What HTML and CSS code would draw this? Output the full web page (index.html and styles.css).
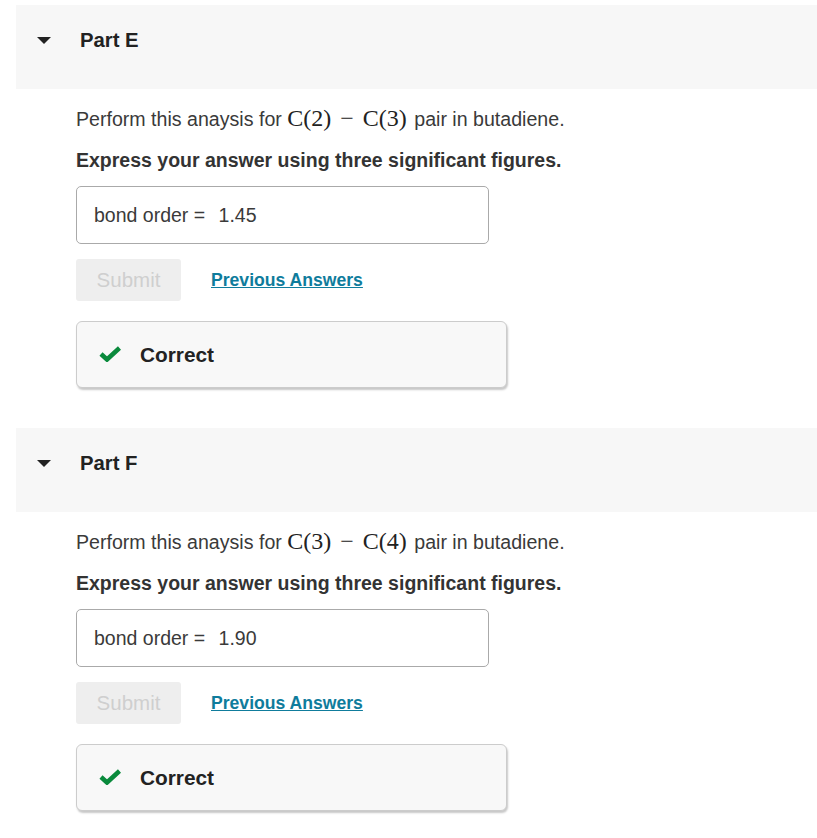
FILE: index.html
```html
<!DOCTYPE html>
<html>
<head>
<meta charset="utf-8">
<link rel="stylesheet" href="styles.css">
</head>
<body>
<div class="page">
  <section class="part">
    <div class="part-header">
      <span class="caret"></span>
      <h2 class="part-title">Part E</h2>
    </div>
    <div class="part-body">
      <p class="prompt">Perform this anaysis for <span class="math">C(2)<span class="minus">−</span>C(3)</span> pair in butadiene.</p>
      <p class="instr">Express your answer using three significant figures.</p>
      <div class="answer-box">bond order = <span class="val">1.45</span></div>
      <div class="actions">
        <span class="submit">Submit</span>
        <a class="prev" href="#">Previous Answers</a>
      </div>
      <div class="feedback">
        <svg class="check" viewBox="0 0 22 16" width="22" height="16"><path d="M2 8 L8 13.5 L20.5 2" fill="none" stroke="#0a8a3c" stroke-width="4.6"/></svg>
        <span class="feedback-text">Correct</span>
      </div>
    </div>
  </section>
  <section class="part">
    <div class="part-header">
      <span class="caret"></span>
      <h2 class="part-title">Part F</h2>
    </div>
    <div class="part-body">
      <p class="prompt">Perform this anaysis for <span class="math">C(3)<span class="minus">−</span>C(4)</span> pair in butadiene.</p>
      <p class="instr">Express your answer using three significant figures.</p>
      <div class="answer-box">bond order = <span class="val">1.90</span></div>
      <div class="actions">
        <span class="submit">Submit</span>
        <a class="prev" href="#">Previous Answers</a>
      </div>
      <div class="feedback">
        <svg class="check" viewBox="0 0 22 16" width="22" height="16"><path d="M2 8 L8 13.5 L20.5 2" fill="none" stroke="#0a8a3c" stroke-width="4.6"/></svg>
        <span class="feedback-text">Correct</span>
      </div>
    </div>
  </section>
</div>
</body>
</html>
```
FILE: styles.css
```css
html, body {
  margin: 0;
  padding: 0;
  background: #ffffff;
}
body {
  font-family: "Liberation Sans", Arial, sans-serif;
  color: #333333;
}
.page {
  padding: 5px 0 0 16px;
}
.part {
  margin-bottom: 40px;
}
.part-header {
  height: 84px;
  background: #f7f7f7;
  display: flex;
  align-items: flex-start;
  padding-top: 23px;
  box-sizing: border-box;
}
.caret {
  width: 0;
  height: 0;
  border-left: 7px solid transparent;
  border-right: 7px solid transparent;
  border-top: 7px solid #222;
  margin: 9px 0 0 21px;
}
.part-title {
  margin: 0 0 0 29px;
  font-size: 20.3px;
  line-height: 24px;
  font-weight: bold;
  color: #222;
}
.part-body {
  padding: 17px 0 0 60px;
}
.prompt {
  margin: 0;
  font-size: 19.6px;
  line-height: 24px;
  color: #3a3a3a;
}
.math {
  font-family: "Liberation Serif", "Times New Roman", serif;
  font-size: 24px;
  color: #222;
  margin-right: 2px;
}
.minus {
  margin: 0 9px;
}
.instr {
  margin: 17px 0 0 0;
  font-size: 19.5px;
  line-height: 24px;
  font-weight: bold;
  color: #333;
}
.answer-box {
  margin-top: 14px;
  width: 413px;
  height: 58px;
  box-sizing: border-box;
  border: 1px solid #aaaaaa;
  border-radius: 5px;
  padding: 0 0 0 17px;
  display: flex;
  align-items: center;
  font-size: 19.5px;
  color: #3a3a3a;
  white-space: pre;
}
.val {
  margin-left: 8px;
}
.actions {
  margin-top: 15px;
  display: flex;
  align-items: center;
}
.submit {
  width: 105px;
  height: 42px;
  background: #eeeeee;
  border-radius: 3px;
  color: #cfcfcf;
  font-size: 20.5px;
  display: flex;
  align-items: center;
  justify-content: center;
}
.prev {
  margin-left: 30px;
  font-size: 17.6px;
  font-weight: bold;
  color: #0f7c9c;
  text-decoration: underline;
}
.feedback {
  margin-top: 20px;
  width: 431px;
  height: 67px;
  box-sizing: border-box;
  border: 1px solid #cccccc;
  border-radius: 6px;
  background: #f8f8f8;
  box-shadow: 1px 2px 2px rgba(0, 0, 0, 0.22);
  display: flex;
  align-items: center;
  padding-left: 22px;
}
.check {
  display: block;
  margin-top: -1px;
}
.feedback-text {
  margin-left: 19px;
  font-size: 20.8px;
  font-weight: bold;
  color: #222;
}
```
